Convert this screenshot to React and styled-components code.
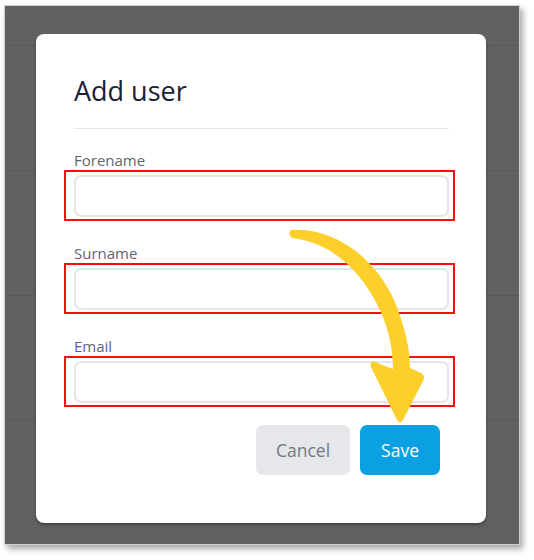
import React from 'react';
import styled, {createGlobalStyle} from 'styled-components';

const GlobalStyle = createGlobalStyle`
  html, body {
    margin: 0;
    padding: 0;
    background: #ffffff;
  }
  body {
    font-family: "Open Sans", "Noto Sans", sans-serif;
  }
`;

const fields = ['Forename', 'Surname', 'Email'];

function App() {
  return (
    <>
      <GlobalStyle />
      <Page>
        <Backdrop>
          <Modal>
            <Title>Add user</Title>
            <Divider />
            {fields.map((name) => (
              <Field key={name}>
                <Label>{name}</Label>
                <Highlight>
                  <Input type="text" aria-label={name} />
                </Highlight>
              </Field>
            ))}
            <Actions>
              <Button>Cancel</Button>
              <Button primary>Save</Button>
            </Actions>
            <Arrow viewBox="36 34 450 489" aria-hidden="true">
              <path
                d="M291 230
                   C333 227, 374 256, 394 300
                   C405 326, 410 349, 410 368
                   L421 373
                   Q426 376, 423 381
                   L403 420
                   Q400 425, 397 420
                   L371 367
                   Q369 361, 375 362
                   L393 369
                   C393 346, 387 323, 377 304
                   C359 269, 330 242, 292 238
                   Q287 234, 291 230 Z"
                fill="#fdcf2b"
              />
            </Arrow>
          </Modal>
        </Backdrop>
      </Page>
    </>
  );
}

const Page = styled.div`
  width: 534px;
  height: 560px;
  padding: 5px 0 0 4px;
  box-sizing: border-box;
`;

const Backdrop = styled.div`
  width: 516px;
  height: 540px;
  box-sizing: border-box;
  display: grid;
  padding: 28px 33px 21px 31px;
  background-color: #606160;
  background-image: linear-gradient(#585958, #585958),
    linear-gradient(#585958, #585958),
    linear-gradient(#585958, #585958),
    linear-gradient(#585958, #585958);
  background-size: 100% 1px;
  background-repeat: no-repeat;
  background-position: 0 39px, 0 164px, 0 289px, 0 414px;
  border: 1px solid #cfcfcf;
  box-shadow: 3px 4px 6px rgba(0, 0, 0, 0.35);
`;

const Modal = styled.div`
  position: relative;
  display: flex;
  flex-direction: column;
  background: #ffffff;
  border-radius: 8px;
  padding: 39px 37px 0 38px;
  box-shadow: 0 2px 3px rgba(0, 0, 0, 0.35);
`;

const Title = styled.h2`
  margin: 0;
  font-size: 27px;
  line-height: 36px;
  font-weight: 400;
  color: #1b2233;
`;

const Divider = styled.hr`
  margin: 19px 0 21px;
  border: 0;
  height: 1px;
  background: #e5e7eb;
`;

const Field = styled.div`
  display: flex;
  flex-direction: column;
  & + & {
    margin-top: 22px;
  }
`;

const Label = styled.label`
  font-size: 15px;
  line-height: 20px;
  color: #5e6572;
`;

const Highlight = styled.div`
  margin: 0 -6px 0 -10px;
  padding: 3px 4px 2px 8px;
  border: 2px solid #f50f0f;
`;

const Input = styled.input`
  display: block;
  width: 100%;
  height: 42px;
  box-sizing: border-box;
  border: 2px solid #e2e5ea;
  border-radius: 7px;
  background: #ffffff;
  outline: none;
`;

const Actions = styled.div`
  display: flex;
  justify-content: flex-end;
  gap: 10px;
  margin: 18px 9px 0 0;
`;

const Button = styled.button`
  height: 50px;
  padding: 0 ${(p) => (p.primary ? '21px' : '20px')};
  border: 0;
  border-radius: 7px;
  font-family: "Open Sans", "Noto Sans", sans-serif;
  font-size: 17.5px;
  background: ${(p) => (p.primary ? '#0aa0e2' : '#e5e7eb')};
  color: ${(p) => (p.primary ? '#ffffff' : '#717783')};
`;

const Arrow = styled.svg`
  position: absolute;
  inset: 0;
  width: 100%;
  height: 100%;
  pointer-events: none;
`;

export default App;
